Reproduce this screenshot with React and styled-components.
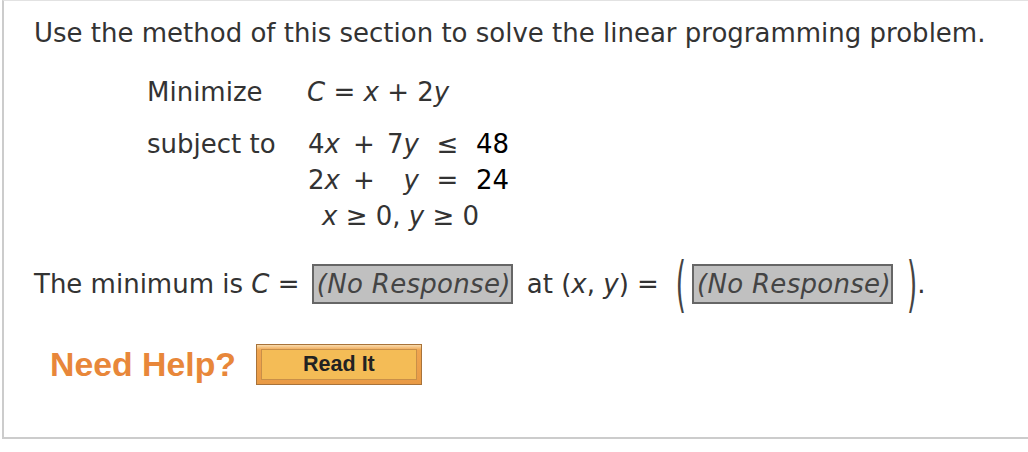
import React from "react";
import styled, { createGlobalStyle } from "styled-components";

const Global = createGlobalStyle`
  html, body { margin: 0; padding: 0; background: #fff; overflow: hidden; }
  body { font-family: "DejaVu Sans", Verdana, sans-serif; color: #333; }
`;

const Panel = styled.div`
  margin-left: 2px;
  width: 1040px;
  height: 439px;
  box-sizing: border-box;
  border-top: 1px solid #e2e2e2;
  border-left: 2px solid #cccccc;
  border-bottom: 2px solid #cccccc;
  padding: 17px 0 0 30px;
  font-size: 26px;
  display: flex;
  flex-direction: column;
`;

const Prompt = styled.div`
  line-height: 30px;
  color: #333;
`;

const Problem = styled.div`
  display: grid;
  grid-template-columns: 160px auto;
  row-gap: 16px;
  margin: 26px 0 0 113px;
  line-height: 36px;
`;

const Label = styled.div`
  color: #333;
`;

const Expr = styled.div`
  color: #333;
  white-space: pre;
`;

const V = styled.i`
  font-style: italic;
`;

const Constraints = styled.div`
  display: grid;
  grid-template-columns: 45px 20px 46px 57px auto;
  line-height: 36px;
  margin-left: 1px;
`;

const Cell = styled.div`
  text-align: ${(p) => p.$align || "left"};
  color: ${(p) => (p.$dark ? "#000" : "#333")};
  white-space: pre;
`;

const SignCell = styled(Cell)`
  text-align: center;
`;

const Span = styled.div`
  grid-column: 1 / -1;
  padding-left: 14px;
  white-space: pre;
`;

const AnswerLine = styled.div`
  display: flex;
  align-items: center;
  margin-top: 30px;
  height: 40px;
  white-space: pre;
`;

const Blank = styled.span`
  display: inline-flex;
  align-items: center;
  box-sizing: border-box;
  width: 201px;
  height: 40px;
  border: 2px solid #666;
  background: #c0c0c0;
  padding-left: 3px;
  font-style: italic;
  letter-spacing: 0.3px;
  color: #444;
  margin: ${(p) => p.$margin || "0"};
`;

const BigParen = styled.span`
  display: inline-block;
  font-size: 26px;
  color: #444;
  transform: scaleY(2.3);
  line-height: 26px;
  margin: ${(p) => p.$margin || "0"};
`;

const HelpRow = styled.div`
  display: flex;
  align-items: center;
  margin-top: 40px;
  padding-left: 16px;
  gap: 20px;
`;

const HelpText = styled.span`
  font-family: "Liberation Sans", Arial, sans-serif;
  font-weight: bold;
  font-size: 33.8px;
  color: #e8873a;
`;

const ReadButton = styled.button`
  box-sizing: border-box;
  width: 166px;
  height: 41px;
  padding: 4px;
  border: 1px solid #a8733a;
  background: linear-gradient(#f9dcae 0, #f0a550 5px, #e99a45 100%);
  cursor: pointer;
  display: flex;
`;

const ButtonFace = styled.span`
  flex: 1;
  display: flex;
  align-items: center;
  justify-content: center;
  border: 1px solid #c98f48;
  background: #f4bc56;
  font-family: "Liberation Sans", Arial, sans-serif;
  font-weight: bold;
  font-size: 21.5px;
  color: #222;
`;

export default function App() {
  return (
    <>
      <Global />
      <Panel>
        <Prompt>Use the method of this section to solve the linear programming problem.</Prompt>
        <Problem>
          <Label>Minimize</Label>
          <Expr>
            <V>C</V> = <V>x</V> + 2<V>y</V>
          </Expr>
          <Label>subject to</Label>
          <Constraints>
            <Cell>4<V>x</V></Cell>
            <SignCell>+</SignCell>
            <Cell $align="right">7<V>y</V></Cell>
            <SignCell>≤</SignCell>
            <Cell $dark>48</Cell>
            <Cell>2<V>x</V></Cell>
            <SignCell>+</SignCell>
            <Cell $align="right"><V>y</V></Cell>
            <SignCell>=</SignCell>
            <Cell $dark>24</Cell>
            <Span>
              <V>x</V> ≥ 0, <V>y</V> ≥ 0
            </Span>
          </Constraints>
        </Problem>
        <AnswerLine>
          The minimum is <V>C</V> ={" "}
          <Blank $margin="0 14px 0 4px">(No Response)</Blank>
          at (<V>x</V>, <V>y</V>) =
          <BigParen $margin="0 6px 0 17px">(</BigParen>
          <Blank>(No Response)</Blank>
          <BigParen $margin="0 0 0 14px">)</BigParen>.
        </AnswerLine>
        <HelpRow>
          <HelpText>Need Help?</HelpText>
          <ReadButton>
            <ButtonFace>Read It</ButtonFace>
          </ReadButton>
        </HelpRow>
      </Panel>
    </>
  );
}
